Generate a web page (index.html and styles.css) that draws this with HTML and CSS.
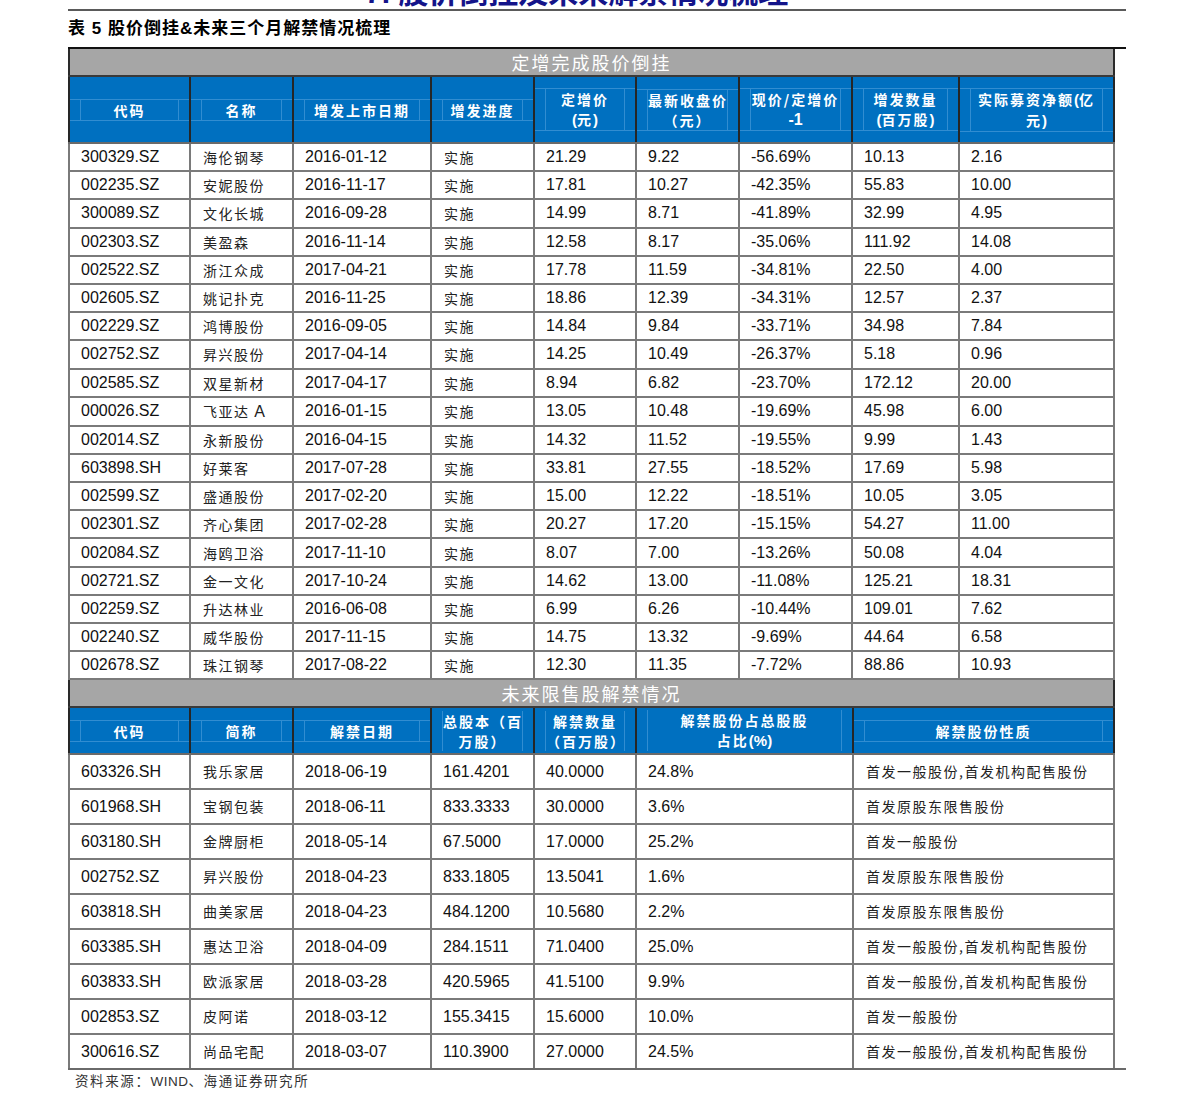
FILE: index.html
```html
<!DOCTYPE html>
<html lang="zh-CN">
<head>
<meta charset="utf-8">
<title>表5 股价倒挂&amp;未来三个月解禁情况梳理</title>
<link rel="stylesheet" href="styles.css">
</head>
<body>
<div class="page">
  <div class="heading"><div class="heading-text">7. 股价倒挂及未来解禁情况梳理</div></div>
  <div class="caption">表 5 股价倒挂&amp;未来三个月解禁情况梳理</div>

  <table class="grid t1">
    <colgroup>
      <col style="width:121px"><col style="width:103px"><col style="width:138px"><col style="width:103px"><col style="width:102px"><col style="width:103px"><col style="width:113px"><col style="width:107px"><col style="width:155px">
    </colgroup>
    <tr class="band"><td colspan="9">定增完成股价倒挂</td></tr>
    <tr class="head h1">
      <th><div class="hbox"><div class="hin">代码</div></div></th>
      <th><div class="hbox"><div class="hin">名称</div></div></th>
      <th><div class="hbox"><div class="hin">增发上市日期</div></div></th>
      <th><div class="hbox"><div class="hin">增发进度</div></div></th>
      <th><div class="hbox"><div class="hin">定增价<br><span class="lat">(</span>元<span class="lat">)</span></div></div></th>
      <th><div class="hbox"><div class="hin">最新收盘价<br>（元）</div></div></th>
      <th><div class="hbox"><div class="hin">现价/定增价<br><span class="lat b">-1</span></div></div></th>
      <th><div class="hbox"><div class="hin">增发数量<br><span class="lat">(</span>百万股<span class="lat">)</span></div></div></th>
      <th><div class="hbox"><div class="hin">实际募资净额<span class="lat">(</span>亿<br>元<span class="lat">)</span></div></div></th>
    </tr>
    <tr><td>300329.SZ</td><td class="cn">海伦钢琴</td><td>2016-01-12</td><td class="cn">实施</td><td>21.29</td><td>9.22</td><td>-56.69%</td><td>10.13</td><td>2.16</td></tr>
    <tr><td>002235.SZ</td><td class="cn">安妮股份</td><td>2016-11-17</td><td class="cn">实施</td><td>17.81</td><td>10.27</td><td>-42.35%</td><td>55.83</td><td>10.00</td></tr>
    <tr><td>300089.SZ</td><td class="cn">文化长城</td><td>2016-09-28</td><td class="cn">实施</td><td>14.99</td><td>8.71</td><td>-41.89%</td><td>32.99</td><td>4.95</td></tr>
    <tr><td>002303.SZ</td><td class="cn">美盈森</td><td>2016-11-14</td><td class="cn">实施</td><td>12.58</td><td>8.17</td><td>-35.06%</td><td>111.92</td><td>14.08</td></tr>
    <tr><td>002522.SZ</td><td class="cn">浙江众成</td><td>2017-04-21</td><td class="cn">实施</td><td>17.78</td><td>11.59</td><td>-34.81%</td><td>22.50</td><td>4.00</td></tr>
    <tr><td>002605.SZ</td><td class="cn">姚记扑克</td><td>2016-11-25</td><td class="cn">实施</td><td>18.86</td><td>12.39</td><td>-34.31%</td><td>12.57</td><td>2.37</td></tr>
    <tr><td>002229.SZ</td><td class="cn">鸿博股份</td><td>2016-09-05</td><td class="cn">实施</td><td>14.84</td><td>9.84</td><td>-33.71%</td><td>34.98</td><td>7.84</td></tr>
    <tr><td>002752.SZ</td><td class="cn">昇兴股份</td><td>2017-04-14</td><td class="cn">实施</td><td>14.25</td><td>10.49</td><td>-26.37%</td><td>5.18</td><td>0.96</td></tr>
    <tr><td>002585.SZ</td><td class="cn">双星新材</td><td>2017-04-17</td><td class="cn">实施</td><td>8.94</td><td>6.82</td><td>-23.70%</td><td>172.12</td><td>20.00</td></tr>
    <tr><td>000026.SZ</td><td class="cn">飞亚达 <span class="lat">A</span></td><td>2016-01-15</td><td class="cn">实施</td><td>13.05</td><td>10.48</td><td>-19.69%</td><td>45.98</td><td>6.00</td></tr>
    <tr><td>002014.SZ</td><td class="cn">永新股份</td><td>2016-04-15</td><td class="cn">实施</td><td>14.32</td><td>11.52</td><td>-19.55%</td><td>9.99</td><td>1.43</td></tr>
    <tr><td>603898.SH</td><td class="cn">好莱客</td><td>2017-07-28</td><td class="cn">实施</td><td>33.81</td><td>27.55</td><td>-18.52%</td><td>17.69</td><td>5.98</td></tr>
    <tr><td>002599.SZ</td><td class="cn">盛通股份</td><td>2017-02-20</td><td class="cn">实施</td><td>15.00</td><td>12.22</td><td>-18.51%</td><td>10.05</td><td>3.05</td></tr>
    <tr><td>002301.SZ</td><td class="cn">齐心集团</td><td>2017-02-28</td><td class="cn">实施</td><td>20.27</td><td>17.20</td><td>-15.15%</td><td>54.27</td><td>11.00</td></tr>
    <tr><td>002084.SZ</td><td class="cn">海鸥卫浴</td><td>2017-11-10</td><td class="cn">实施</td><td>8.07</td><td>7.00</td><td>-13.26%</td><td>50.08</td><td>4.04</td></tr>
    <tr><td>002721.SZ</td><td class="cn">金一文化</td><td>2017-10-24</td><td class="cn">实施</td><td>14.62</td><td>13.00</td><td>-11.08%</td><td>125.21</td><td>18.31</td></tr>
    <tr><td>002259.SZ</td><td class="cn">升达林业</td><td>2016-06-08</td><td class="cn">实施</td><td>6.99</td><td>6.26</td><td>-10.44%</td><td>109.01</td><td>7.62</td></tr>
    <tr><td>002240.SZ</td><td class="cn">威华股份</td><td>2017-11-15</td><td class="cn">实施</td><td>14.75</td><td>13.32</td><td>-9.69%</td><td>44.64</td><td>6.58</td></tr>
    <tr><td>002678.SZ</td><td class="cn">珠江钢琴</td><td>2017-08-22</td><td class="cn">实施</td><td>12.30</td><td>11.35</td><td>-7.72%</td><td>88.86</td><td>10.93</td></tr>
  </table>

  <table class="grid t2">
    <colgroup>
      <col style="width:121px"><col style="width:103px"><col style="width:138px"><col style="width:103px"><col style="width:102px"><col style="width:217px"><col style="width:261px">
    </colgroup>
    <tr class="band"><td colspan="7">未来限售股解禁情况</td></tr>
    <tr class="head h2">
      <th><div class="hbox"><div class="hin">代码</div></div></th>
      <th><div class="hbox"><div class="hin">简称</div></div></th>
      <th><div class="hbox"><div class="hin">解禁日期</div></div></th>
      <th><div class="hbox open"><div class="hin">总股本（百<br>万股）</div></div></th>
      <th><div class="hbox open"><div class="hin">解禁数量<br>（百万股）</div></div></th>
      <th><div class="hbox open"><div class="hin">解禁股份占总股股<br>占比<span class="lat">(%)</span></div></div></th>
      <th><div class="hbox"><div class="hin">解禁股份性质</div></div></th>
    </tr>
    <tr><td>603326.SH</td><td class="cn">我乐家居</td><td>2018-06-19</td><td>161.4201</td><td>40.0000</td><td>24.8%</td><td class="cn">首发一般股份,首发机构配售股份</td></tr>
    <tr><td>601968.SH</td><td class="cn">宝钢包装</td><td>2018-06-11</td><td>833.3333</td><td>30.0000</td><td>3.6%</td><td class="cn">首发原股东限售股份</td></tr>
    <tr><td>603180.SH</td><td class="cn">金牌厨柜</td><td>2018-05-14</td><td>67.5000</td><td>17.0000</td><td>25.2%</td><td class="cn">首发一般股份</td></tr>
    <tr><td>002752.SZ</td><td class="cn">昇兴股份</td><td>2018-04-23</td><td>833.1805</td><td>13.5041</td><td>1.6%</td><td class="cn">首发原股东限售股份</td></tr>
    <tr><td>603818.SH</td><td class="cn">曲美家居</td><td>2018-04-23</td><td>484.1200</td><td>10.5680</td><td>2.2%</td><td class="cn">首发原股东限售股份</td></tr>
    <tr><td>603385.SH</td><td class="cn">惠达卫浴</td><td>2018-04-09</td><td>284.1511</td><td>71.0400</td><td>25.0%</td><td class="cn">首发一般股份,首发机构配售股份</td></tr>
    <tr><td>603833.SH</td><td class="cn">欧派家居</td><td>2018-03-28</td><td>420.5965</td><td>41.5100</td><td>9.9%</td><td class="cn">首发一般股份,首发机构配售股份</td></tr>
    <tr><td>002853.SZ</td><td class="cn">皮阿诺</td><td>2018-03-12</td><td>155.3415</td><td>15.6000</td><td>10.0%</td><td class="cn">首发一般股份</td></tr>
    <tr><td>300616.SZ</td><td class="cn">尚品宅配</td><td>2018-03-07</td><td>110.3900</td><td>27.0000</td><td>24.5%</td><td class="cn">首发一般股份,首发机构配售股份</td></tr>
  </table>

  <div class="source">资料来源：<span class="lat">WIND</span>、海通证券研究所</div>
</div>
</body>
</html>
```

FILE: styles.css
```css
html, body {
  margin: 0;
  padding: 0;
  background: #ffffff;
}

body {
  font-family: "Liberation Sans", Arial, "Noto Sans CJK SC", sans-serif;
  color: #111111;
}

.page {
  padding-left: 68px;
  width: 1058px;
}

.heading {
  height: 9px;
  overflow: hidden;
  border-bottom: 2px solid #5a5a5a;
}

.heading-text {
  margin-top: -22px;
  padding-left: 297px;
  font-family: "Liberation Sans", "Noto Sans CJK SC", sans-serif;
  font-size: 30px;
  line-height: 30px;
  font-weight: bold;
  color: #14148a;
  white-space: nowrap;
}

.caption {
  height: 36px;
  line-height: 36px;
  font-family: "Liberation Sans", "Noto Sans CJK SC", sans-serif;
  font-size: 17px;
  letter-spacing: 1px;
  font-weight: bold;
  color: #000000;
  border-bottom: 2px solid #111111;
  white-space: nowrap;
}

.grid {
  width: 1045px;
  table-layout: fixed;
  border-collapse: collapse;
  border-left: 2px solid #2a2a2a;
  border-right: 2px solid #2a2a2a;
}

.grid td {
  border: 2px solid #7a7a7a;
  padding: 0 0 0 11px;
  font-size: 16px;
  white-space: nowrap;
  overflow: hidden;
  color: #111111;
}

.t1 td {
  height: 26.2px;
  line-height: 26px;
}

.t2 td {
  height: 33px;
  line-height: 33px;
}

.grid td.cn {
  font-family: "Noto Sans CJK SC", sans-serif;
  font-size: 14px;
  letter-spacing: 1.5px;
  color: #222222;
  padding-left: 12px;
}

.grid td.cn .lat {
  font-family: "Liberation Sans", Arial, sans-serif;
  font-size: 16px;
  letter-spacing: 0;
}

.grid tr.band td {
  background: #a6a6a6;
  color: #ffffff;
  text-align: center;
  padding: 0;
  height: 26px;
  line-height: 26px;
  font-family: "Noto Sans CJK SC", sans-serif;
  font-size: 18px;
  letter-spacing: 2px;
  border-left: 2px solid #2a2a2a;
  border-right: 2px solid #2a2a2a;
  border-top: 0;
  border-bottom: 2px solid #3a3a3a;
}

.grid th {
  background: #0070c0;
  color: #ffffff;
  font-family: "Noto Sans CJK SC", sans-serif;
  font-weight: bold;
  font-size: 14px;
  letter-spacing: 2px;
  text-align: center;
  vertical-align: middle;
  padding: 0;
  border-left: 2px solid #262626;
  border-right: 2px solid #262626;
  border-bottom: 2px solid #6a6a6a;
  white-space: nowrap;
}

.h1 th {
  height: 65px;
}

.h2 th {
  height: 45px;
}

.hbox {
  border-top: 1px solid rgba(140, 195, 240, 0.35);
  border-bottom: 1px solid rgba(140, 195, 240, 0.35);
}

.hbox.open {
  border-top: 0;
  border-bottom: 0;
}

.hin {
  margin: 0 10px;
  border-left: 1px solid rgba(140, 195, 240, 0.35);
  border-right: 1px solid rgba(140, 195, 240, 0.35);
  line-height: 20px;
}

.hin .lat {
  font-family: "Liberation Sans", Arial, sans-serif;
  font-size: 15px;
  letter-spacing: 0;
}

.hin .lat.b {
  font-weight: bold;
  font-size: 16px;
}

.t2 tr:last-child td {
  border-bottom: 0;
}

.source {
  border-top: 2px solid #6a6a6a;
  padding-left: 7px;
  height: 21px;
  line-height: 21px;
  font-family: "Noto Sans CJK SC", sans-serif;
  font-size: 13.5px;
  letter-spacing: 1.6px;
  color: #333333;
}

.source .lat {
  font-family: "Liberation Sans", Arial, sans-serif;
  letter-spacing: 0.5px;
}
```
